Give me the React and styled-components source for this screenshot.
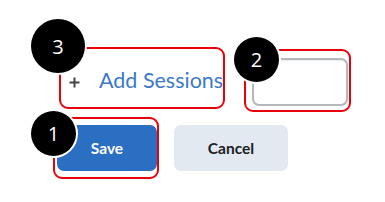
import styled, { createGlobalStyle } from 'styled-components';

const GlobalStyle = createGlobalStyle`
  body {
    margin: 0;
    background: #fff;
    font-family: Lato, 'Liberation Sans', sans-serif;
  }
`;

const Page = styled.div`
  width: 385px;
  height: 202px;
  padding-top: 47px;
  box-sizing: border-box;
  overflow: hidden;
`;

const Row = styled.div`
  display: flex;
  align-items: flex-start;
  margin-left: ${(p) => p.$left}px;
  margin-top: ${(p) => p.$top || 0}px;
  gap: ${(p) => p.$gap || 0}px;
`;

const Callout = styled.div`
  position: relative;
  box-sizing: border-box;
  flex-shrink: 0;
  border: 2px solid #e8000a;
  border-radius: 9px;
  width: ${(p) => p.$w}px;
  height: ${(p) => p.$h}px;
  margin-top: ${(p) => p.$mt || 0}px;
  padding: ${(p) => p.$pad};
  display: flex;
  align-items: ${(p) => p.$align || 'flex-start'};
`;

const Badge = styled.div`
  position: absolute;
  left: ${(p) => p.$x}px;
  top: ${(p) => p.$y}px;
  width: ${(p) => p.$size}px;
  height: ${(p) => p.$size}px;
  border-radius: 50%;
  background: #000;
  box-shadow: 0 0 0 2px #fff;
  color: #fff;
  font-family: 'Open Sans', 'Noto Sans', sans-serif;
  font-size: 20px;
  display: flex;
  align-items: center;
  justify-content: center;
  z-index: 2;
`;

const AddLink = styled.button`
  display: flex;
  align-items: center;
  flex-shrink: 0;
  white-space: nowrap;
  gap: 19px;
  border: 0;
  background: none;
  padding: 0;
  margin-top: 4px;
  font-family: Lato, 'Liberation Sans', sans-serif;
  font-size: 21.5px;
  color: #3a7ac6;
  cursor: pointer;
`;

const Plus = styled.svg`
  width: 11px;
  height: 11px;
  margin-top: 4px;
  flex-shrink: 0;
`;

const TextBox = styled.input`
  box-sizing: border-box;
  width: 96px;
  height: 48px;
  border: 2px solid #b4b7bc;
  border-radius: 7px;
  box-shadow: inset 0 1px 1px rgba(0, 0, 0, 0.08);
  background: #fff;
  outline: none;
`;

const Button = styled.button`
  box-sizing: border-box;
  flex-shrink: 0;
  width: ${(p) => p.$w}px;
  height: 46px;
  margin-top: ${(p) => p.$mt || 0}px;
  border: 0;
  border-radius: 7px;
  background: ${(p) => (p.$primary ? '#2a6fc1' : '#e3e9f1')};
  color: ${(p) => (p.$primary ? '#fff' : '#202122')};
  font-family: Lato, 'Liberation Sans', sans-serif;
  font-weight: 700;
  font-size: 15.5px;
  cursor: pointer;
`;

export default function App() {
  return (
    <>
      <GlobalStyle />
      <Page>
        <Row $left={59} $gap={19}>
          <Callout $w={166} $h={62} $pad="0 0 0 8px" $align="center">
            <Badge $x={-30} $y={-30} $size={54}>3</Badge>
            <AddLink>
              <Plus viewBox="0 0 11 11">
                <path d="M5.5 0.5v10M0.5 5.5h10" stroke="#444" strokeWidth="2" fill="none" />
              </Plus>
              Add Sessions
            </AddLink>
          </Callout>
          <Callout $w={107} $h={63} $mt={2} $pad="7px 0 0 6px">
            <Badge $x={-12} $y={-14} $size={45}>2</Badge>
            <TextBox type="text" />
          </Callout>
        </Row>
        <Row $left={53} $top={5} $gap={15}>
          <Callout $w={106} $h={62} $pad="6px 0 0 2px">
            <Badge $x={-24} $y={-8} $size={45}>1</Badge>
            <Button $primary $w={100}>Save</Button>
          </Callout>
          <Button $w={114} $mt={8}>Cancel</Button>
        </Row>
      </Page>
    </>
  );
}
